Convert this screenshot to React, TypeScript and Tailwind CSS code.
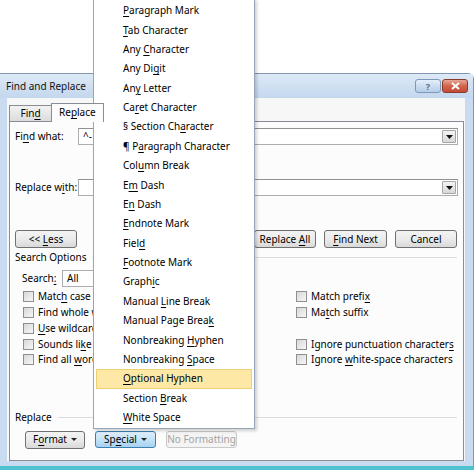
import React from "react";

const font = { fontFamily: '"Noto Sans", "Segoe UI", sans-serif' };

// "&" marks the access key letter
const Acc = ({ text }: { text: string }) => {
  const i = text.indexOf("&");
  if (i < 0) return <span className="whitespace-pre">{text}</span>;
  return (
    <span className="whitespace-pre">
      {text.slice(0, i)}
      <span className="underline underline-offset-[2px] decoration-[1px]">{text[i + 1]}</span>
      {text.slice(i + 2)}
    </span>
  );
};

const menuItems = [
  "&Paragraph Mark",
  "&Tab Character",
  "Any &Character",
  "Any Di&git",
  "An&y Letter",
  "Ca&ret Character",
  "§ Section Ch&aracter",
  "¶ P&aragraph Character",
  "Col&umn Break",
  "E&m Dash",
  "E&n Dash",
  "&Endnote Mark",
  "Fiel&d",
  "&Footnote Mark",
  "Graph&ic",
  "Manual &Line Break",
  "Manual Page Brea&k",
  "Nonbreaking &Hyphen",
  "Nonbreaking &Space",
  "&Optional Hyphen",
  "Section &Break",
  "&White Space",
];

const Arrow = () => (
  <svg width="6" height="3" viewBox="0 0 6 3" className="ml-[4px]">
    <path d="M0 0h6L3 3z" fill="#222" />
  </svg>
);

const Button = ({ label, className = "", arrow = false }: { label: string; className?: string; arrow?: boolean }) => (
  <div
    className={
      "flex items-center justify-center h-[18px] rounded-[3px] border border-[#707070] bg-linear-to-b from-[#f3f3f3] via-[#ebebeb] to-[#d9d9d9] text-[10px] text-black " +
      className
    }
  >
    <Acc text={label} />
    {arrow && <Arrow />}
  </div>
);

const Combo = ({ value, className = "" }: { value: string; className?: string }) => (
  <div
    className={
      "relative h-[17px] border border-[#abadb3] border-t-[#8e9196] bg-white flex items-center pl-[4px] text-[10px] " +
      className
    }
  >
    {value}
    <div className="absolute right-[1px] top-[1px] w-[14px] h-[13px] border border-[#a5a5a5] rounded-[1px] bg-linear-to-b from-[#f4f4f4] to-[#d8d8d8] flex items-center justify-center">
      <svg width="7" height="4" viewBox="0 0 7 4">
        <path d="M0 0h7L3.5 4z" fill="#111" />
      </svg>
    </div>
  </div>
);

const Check = ({ label }: { label: string }) => (
  <div className="flex items-center h-[15.75px] gap-[4px] whitespace-nowrap">
    <div className="shrink-0 w-[11px] h-[11px] border border-[#8f8f8f] bg-linear-to-br from-[#d8d8d8] to-[#f7f7f7]" />
    <span className="text-[10px]">
      <Acc text={label} />
    </span>
  </div>
);

const App = () => {
  return (
    <div className="relative w-[474px] h-[470px] overflow-hidden bg-white text-black" style={font}>
      <div className="h-[73px]" />

      {/* dialog window */}
      <div className="h-[393px] flex flex-col bg-[#c8dbf0] border-t border-r border-[#8096b0] rounded-tr-[6px]">
        <div className="h-[24px] flex items-center pl-[6px] bg-linear-to-b from-[#dde9f6] to-[#c3d7ee] relative">
          <span className="text-[10px] text-[#111]">Find and Replace</span>
          <div className="absolute left-[415px] top-[5px] flex gap-[1px]">
            <div className="w-[26px] h-[14px] rounded-[3px] border border-[#7f98b8] bg-linear-to-b from-[#e4eefa] to-[#b6cde8] flex items-center justify-center text-[9px] font-bold text-[#5a6d86] leading-none">
              ?
            </div>
            <div className="w-[26px] h-[14px] rounded-[3px] border border-[#8a3b2e] bg-linear-to-b from-[#e7a795] via-[#d2654f] to-[#c44a35] flex items-center justify-center">
              <svg width="9" height="8" viewBox="0 0 9 8">
                <path d="M1 1l7 6M8 1L1 7" stroke="#fff" strokeWidth="2" />
              </svg>
            </div>
          </div>
        </div>

        <div className="flex-1 pl-[7px] pr-[8px] pb-[5px] flex">
          <div className="w-[458px] bg-[#f7f7f7] flex flex-col pt-[4px]">
            {/* tabs */}
            <div className="flex items-end h-[19px] pl-[2px] text-[10px]">
              <div className="w-[43px] h-[16px] border border-b-0 border-[#898c95] bg-linear-to-b from-[#f2f2f2] to-[#dcdcdc] flex items-center justify-center">
                <Acc text="Fin&d" />
              </div>
              <div className="h-[19px] -ml-px border border-b-0 border-[#898c95] bg-[#fcfcfc] flex items-center px-[7px] relative z-10 -mb-px pb-px">
                <Acc text="Re&place" />
              </div>
            </div>

            {/* tab page */}
            <div className="ml-[2px] w-[455px] h-[340px] border border-[#898c95] bg-[#fcfcfc] flex flex-col pl-[5px] pt-[6px] text-[10px]">
              <div className="flex items-center h-[17px]">
                <span className="w-[63px]">
                  <Acc text="Fi&nd what:" />
                </span>
                <Combo value="^-" className="w-[380px]" />
              </div>

              <div className="flex items-center h-[17px] mt-[34px]">
                <span className="w-[63px]">
                  <Acc text="Replace w&ith:" />
                </span>
                <Combo value="" className="w-[380px]" />
              </div>

              <div className="flex items-center mt-[34px] h-[18px]">
                <Button label="<< &Less" className="w-[62px]" />
                <div className="ml-auto mr-[6px] flex gap-[8px]">
                  <Button label="Replace &All" className="w-[62px]" />
                  <Button label="&Find Next" className="w-[63px]" />
                  <Button label="Cancel" className="w-[62px]" />
                </div>
              </div>

              <div className="flex items-center h-[14px] mt-[2px] pr-[6px]">
                <span>Search Options</span>
                <div className="flex-1 ml-[6px] h-px bg-[#dcdcdc]" />
              </div>

              <div className="flex items-center h-[17px] mt-[6px] pl-[7px]">
                <span className="w-[40px]">
                  Search<span className="underline underline-offset-[2px]">:</span>
                </span>
                <div className="h-[17px] w-[120px] border border-[#abadb3] bg-white flex items-center pl-[4px]">
                  All
                </div>
              </div>

              <div className="flex mt-[2px] pl-[8px]">
                <div className="w-[273px] flex">
                  <div className="w-[70px] overflow-hidden flex flex-col">
                    <Check label="Matc&h case" />
                    <Check label="Find whole words onl&y" />
                    <Check label="&Use wildcards" />
                    <Check label="Sounds li&ke (English)" />
                    <Check label="Find all &word forms (English)" />
                  </div>
                </div>
                <div className="flex flex-col">
                  <Check label="Match prefi&x" />
                  <Check label="Ma&tch suffix" />
                  <div className="h-[15.75px]" />
                  <Check label="Ignore punctuation character&s" />
                  <Check label="Ignore &white-space characters" />
                </div>
              </div>

              <div className="flex items-center h-[14px] mt-[43px] pr-[6px]">
                <span>Replace</span>
                <div className="flex-1 ml-[6px] h-px bg-[#dcdcdc]" />
              </div>

              <div className="flex items-center gap-[10px] mt-[6px] pl-[10px]">
                <Button label="F&ormat" className="w-[60px] h-[17px]" arrow />
                <div className="w-[61px] h-[17px] rounded-[3px] border border-[#3c7fb1] bg-linear-to-b from-[#e0effc] via-[#c4e2f8] to-[#a6d2f2] flex items-center justify-center">
                  <Acc text="Sp&ecial" />
                  <Arrow />
                </div>
                <div className="w-[71px] h-[17px] rounded-[3px] border border-[#c9c9c9] bg-[#f4f4f4] flex items-center justify-center text-[#a3a3a3]">
                  No Formatting
                </div>
              </div>
            </div>
          </div>
        </div>
      </div>

      <div className="h-[4px] bg-[#4ec3cf]" />

      {/* Special dropdown menu */}
      <div className="absolute left-[93px] top-[-2px] w-[162px] h-[431px] border border-[#97a6b8] bg-white pt-[2px] px-[2px] shadow-[2px_2px_3px_rgba(0,0,0,0.18)]">
        {menuItems.map((item) => {
          const active = item === "&Optional Hyphen";
          return (
            <div
              key={item}
              className={
                "h-[19.375px] flex items-center pl-[26px] text-[10px] border " +
                (active ? "bg-[#fde8a6] border-[#efcf74]" : "border-transparent")
              }
            >
              <Acc text={item} />
            </div>
          );
        })}
      </div>
    </div>
  );
};

export default App;
